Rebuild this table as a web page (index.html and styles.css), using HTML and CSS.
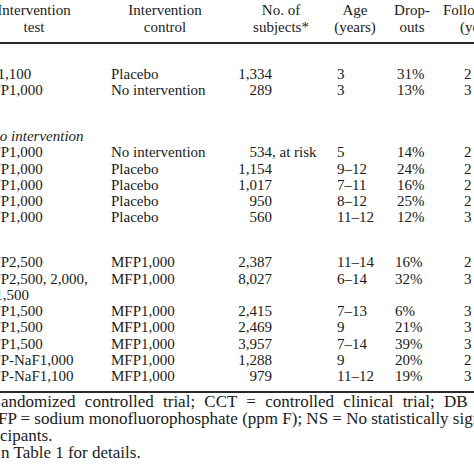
FILE: index.html
```html
<!DOCTYPE html>
<html>
<head>
<meta charset="utf-8">
<link rel="stylesheet" href="styles.css">
</head>
<body>
<div class="sheet">
  <div class="head">
    <div class="hc c1"><span>Intervention</span><span>test</span></div>
    <div class="hc c2"><span>Intervention</span><span>control</span></div>
    <div class="hc c3"><span>No. of</span><span>subjects*</span></div>
    <div class="hc c4"><span>Age</span><span>(years)</span></div>
    <div class="hc c5"><span>Drop-</span><span>outs</span></div>
    <div class="hc c6"><span>Follow-up</span><span class="sub">(years)</span></div>
  </div>

  <div class="sec first">
    <div class="shift">NaF 1,100</div><div>Placebo</div><div><span class="n">1,334</span></div><div>3</div><div class="pu">31%</div><div>2</div>
    <div>MFP1,000</div><div>No intervention</div><div><span class="n">289</span></div><div>3</div><div class="pu">13%</div><div>3</div>
  </div>

  <div class="sec mid">
    <div class="label">Placebo/no intervention</div>
    <div>MFP1,000</div><div>No intervention</div><div><span class="n">534</span>, at risk</div><div>5</div><div class="pu">14%</div><div>2</div>
    <div>MFP1,000</div><div>Placebo</div><div><span class="n">1,154</span></div><div>9–12</div><div class="pu">24%</div><div>2</div>
    <div>MFP1,000</div><div>Placebo</div><div><span class="n">1,017</span></div><div>7–11</div><div class="pu">16%</div><div>2</div>
    <div>MFP1,000</div><div>Placebo</div><div><span class="n">950</span></div><div>8–12</div><div class="pu">25%</div><div>2</div>
    <div>MFP1,000</div><div>Placebo</div><div><span class="n">560</span></div><div>11–12</div><div class="pu">12%</div><div>3</div>
  </div>

  <div class="sec mid last">
    <div>MFP2,500</div><div>MFP1,000</div><div><span class="n">2,387</span></div><div>11–14</div><div>16%</div><div>2</div>
    <div>MFP2,500, 2,000,<br>or 1,500</div><div>MFP1,000</div><div><span class="n">8,027</span></div><div>6–14</div><div>32%</div><div>3</div>
    <div>MFP1,500</div><div>MFP1,000</div><div><span class="n">2,415</span></div><div>7–13</div><div>6%</div><div>3</div>
    <div>MFP1,500</div><div>MFP1,000</div><div><span class="n">2,469</span></div><div>9</div><div>21%</div><div>3</div>
    <div>MFP1,500</div><div>MFP1,000</div><div><span class="n">3,957</span></div><div>7–14</div><div>39%</div><div>3</div>
    <div>MFP-NaF1,000</div><div>MFP1,000</div><div><span class="n">1,288</span></div><div>9</div><div>20%</div><div>2</div>
    <div>MFP-NaF1,100</div><div>MFP1,000</div><div><span class="n">979</span></div><div>11–12</div><div>19%</div><div>3</div>
  </div>
</div>

<div class="notes">
  <div class="ln l1">andomized controlled trial; CCT = controlled clinical trial; DB = double blind;</div>
  <div class="ln l2">FP = sodium monofluorophosphate (ppm F); NS = No statistically significant difference between</div>
  <div class="ln l3">cipants.</div>
  <div class="ln l4">n Table 1 for details.</div>
</div>
</body>
</html>
```

FILE: styles.css
```css
html, body {
  margin: 0;
  padding: 0;
  overflow: hidden;
  background: #ffffff;
}

body {
  width: 474px;
  height: 474px;
  font-family: "Liberation Serif", "Times New Roman", serif;
  font-size: 15px;
  color: #1a1a1a;
}

.sheet {
  margin-left: -21px;
  width: 600px;
}

.head {
  display: flex;
  padding-top: 1.5px;
  padding-bottom: 6.5px;
  border-bottom: 2px solid #2a2a2a;
  line-height: 17px;
}

.hc {
  display: flex;
  flex-direction: column;
  align-items: center;
  white-space: nowrap;
}

.hc.c1 { width: 110px; }
.hc.c2 { width: 152px; }
.hc.c3 { width: 80px; }
.hc.c4 { width: 68px; }
.hc.c5 { width: 46px; }
.hc.c6 {
  align-items: flex-start;
  padding-left: 8px;
}
.hc.c6 .sub { padding-left: 17px; }

.sec {
  display: grid;
  grid-template-columns: 132px 126px 100px 58px 69px 60px;
  line-height: 16.25px;
  white-space: nowrap;
}

.sec.first { margin-top: 22px; }
.sec.mid { margin-top: 29.5px; }
.sec.last {
  margin-top: 28.8px;
  padding-bottom: 6.6px;
  border-bottom: 2px solid #2a2a2a;
}

.sec .shift { margin-left: -11px; }

.sec .label {
  grid-column: 1 / -1;
  font-style: italic;
  margin-left: -40px;
}

.n {
  display: inline-block;
  width: 35px;
  text-align: right;
}

.pu { padding-left: 2px; }

.notes {
  font-size: 17px;
  line-height: 17px;
  white-space: nowrap;
}

.l1 { margin-left: 1px; word-spacing: 5px; }
.l2 { margin-left: -2px; }
.l3 { margin-left: 0; }
.l4 { margin-left: 1px; }
```
